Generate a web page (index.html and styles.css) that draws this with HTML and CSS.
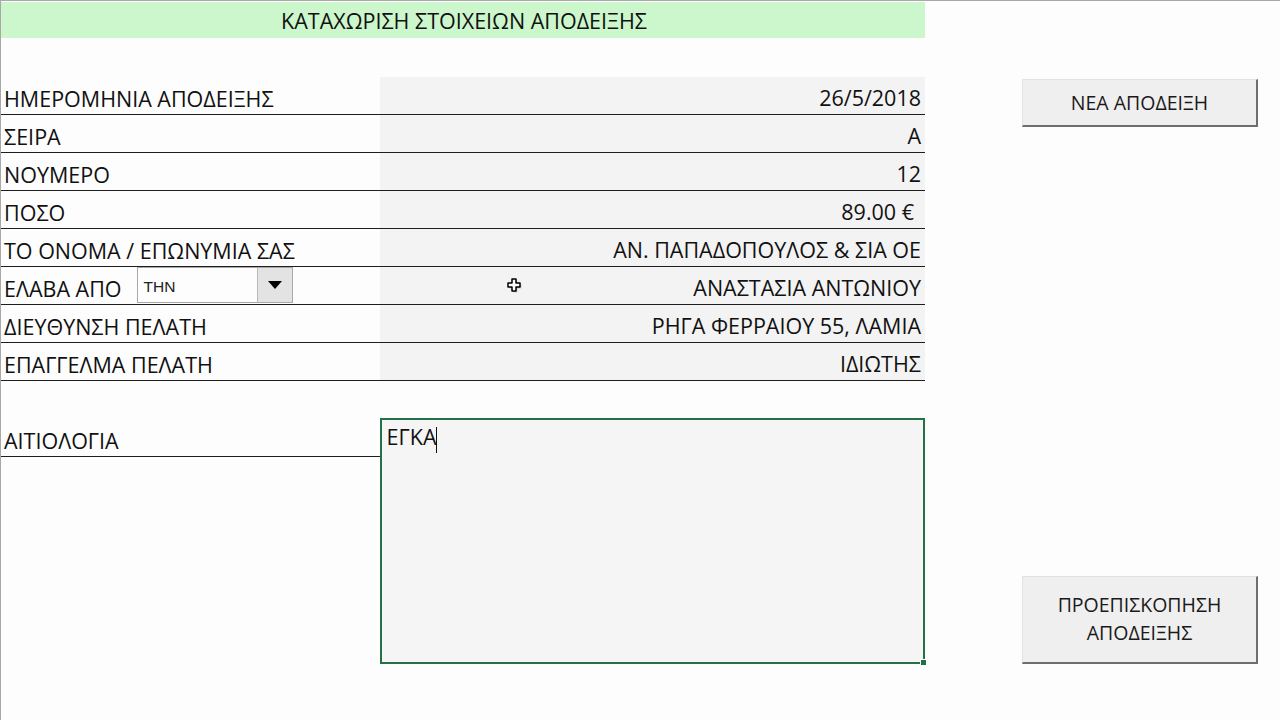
FILE: index.html
```html
<!DOCTYPE html>
<html lang="el">
<head>
<meta charset="utf-8">
<title>ΚΑΤΑΧΩΡΙΣΗ ΣΤΟΙΧΕΙΩΝ ΑΠΟΔΕΙΞΗΣ</title>
<link rel="stylesheet" href="styles.css">
</head>
<body>
<div class="page">
  <div class="sheet">
    <div class="title">ΚΑΤΑΧΩΡΙΣΗ ΣΤΟΙΧΕΙΩΝ ΑΠΟΔΕΙΞΗΣ</div>
    <div class="rows">
      <div class="row"><div class="label">ΗΜΕΡΟΜΗΝΙΑ ΑΠΟΔΕΙΞΗΣ</div><div class="value">26/5/2018</div></div>
      <div class="row"><div class="label">ΣΕΙΡΑ</div><div class="value">Α</div></div>
      <div class="row"><div class="label">ΝΟΥΜΕΡΟ</div><div class="value">12</div></div>
      <div class="row"><div class="label">ΠΟΣΟ</div><div class="value money">89.00 €</div></div>
      <div class="row"><div class="label">ΤΟ ΟΝΟΜΑ / ΕΠΩΝΥΜΙΑ ΣΑΣ</div><div class="value">ΑΝ. ΠΑΠΑΔΟΠΟΥΛΟΣ &amp; ΣΙΑ ΟΕ</div></div>
      <div class="row">
        <div class="label with-combo">
          <span>ΕΛΑΒΑ ΑΠΟ</span>
          <div class="combo">
            <span class="combo-text">ΤΗΝ</span>
            <span class="combo-btn"><svg width="14" height="8" viewBox="0 0 14 8"><path d="M0 0H14L7 8Z" fill="#000"/></svg></span>
          </div>
        </div>
        <div class="value cursor-host">ΑΝΑΣΤΑΣΙΑ ΑΝΤΩΝΙΟΥ
          <svg class="move-cursor" width="16" height="16" viewBox="0 0 16 16">
            <path d="M6 2H10V6H14V10H10V14H6V10H2V6H6Z" fill="#888" opacity="0.35" transform="translate(1.5 1.5)"/>
            <path d="M6 2H10V6H14V10H10V14H6V10H2V6H6Z" fill="#fff" stroke="#000" stroke-width="1.5" stroke-linejoin="round"/>
          </svg>
        </div>
      </div>
      <div class="row"><div class="label">ΔΙΕΥΘΥΝΣΗ ΠΕΛΑΤΗ</div><div class="value">ΡΗΓΑ ΦΕΡΡΑΙΟΥ 55, ΛΑΜΙΑ</div></div>
      <div class="row"><div class="label">ΕΠΑΓΓΕΛΜΑ ΠΕΛΑΤΗ</div><div class="value">ΙΔΙΩΤΗΣ</div></div>
    </div>
    <div class="notes">
      <div class="label notes-label">ΑΙΤΙΟΛΟΓΙΑ</div>
      <div class="textbox"><span class="typed">ΕΓΚΑ</span><span class="caret"></span><span class="handle"></span></div>
    </div>
  </div>
  <div class="side">
    <div class="btn btn-new">ΝΕΑ ΑΠΟΔΕΙΞΗ</div>
    <div class="btn btn-preview">ΠΡΟΕΠΙΣΚΟΠΗΣΗ<br>ΑΠΟΔΕΙΞΗΣ</div>
  </div>
</div>
</body>
</html>
```

FILE: styles.css
```css
html, body {
  margin: 0;
  padding: 0;
  height: 100%;
}
body {
  background: #fdfdfd;
  font-family: "Open Sans", "Noto Sans", "DejaVu Sans", sans-serif;
  color: #111;
  overflow: hidden;
}
.page {
  display: flex;
  height: 720px;
  box-sizing: border-box;
  border-top: 1px solid #a8a8a8;
  border-left: 1px solid #a8a8a8;
}
.sheet {
  width: 924px;
  display: flex;
  flex-direction: column;
}
.title {
  margin-top: 1px;
  height: 36px;
  background: #ccf7cc;
  display: flex;
  align-items: center;
  justify-content: center;
  font-size: 21.5px;
  padding-left: 2px;
}
.rows {
  margin-top: 39px;
  display: flex;
  flex-direction: column;
}
.row {
  display: flex;
  height: 38px;
  box-sizing: border-box;
  border-bottom: 1px solid #1e1e1e;
}
.label {
  width: 379px;
  display: flex;
  align-items: flex-end;
  padding-left: 3px;
  padding-bottom: 1px;
  box-sizing: border-box;
  font-size: 21.5px;
  white-space: nowrap;
}
.value {
  flex: 1;
  background: #f3f3f3;
  display: flex;
  align-items: flex-end;
  justify-content: flex-end;
  padding-right: 4px;
  padding-bottom: 2px;
  box-sizing: border-box;
  font-size: 21.5px;
  white-space: nowrap;
}
.value.money {
  padding-right: 11px;
}
.with-combo {
  gap: 15px;
}
.combo {
  align-self: flex-start;
  width: 156px;
  height: 36px;
  box-sizing: border-box;
  border: 1px solid #a9a9a9;
  background: #fdfdfd;
  display: flex;
}
.combo-text {
  flex: 1;
  display: flex;
  align-items: center;
  padding-left: 6px;
  padding-top: 3px;
  font-size: 15.5px;
  font-family: "Liberation Sans", Arial, sans-serif;
  color: #222;
}
.combo-btn {
  width: 34px;
  background: #e3e3e3;
  border-left: 1px solid #b8b8b8;
  display: flex;
  align-items: center;
  justify-content: center;
}
.cursor-host {
  position: relative;
}
.move-cursor {
  position: absolute;
  left: 126px;
  top: 10px;
}
.notes {
  margin-top: 37px;
  display: flex;
  align-items: flex-start;
}
.notes-label {
  height: 39px;
  border-bottom: 1px solid #1e1e1e;
}
.textbox {
  position: relative;
  width: 546px;
  height: 246px;
  box-sizing: border-box;
  border: 2px solid #217346;
  background: #f5f5f5;
  padding: 2px 0 0 5px;
  font-size: 21.5px;
  display: flex;
  align-items: flex-start;
}
.typed {
  line-height: 30px;
}
.caret {
  display: inline-block;
  width: 1px;
  height: 26px;
  margin-top: 5px;
  background: #111;
}
.handle {
  position: absolute;
  right: -4px;
  bottom: -4px;
  width: 5px;
  height: 5px;
  background: #217346;
  border: 1px solid #fff;
}
.side {
  flex: 1;
  display: flex;
  flex-direction: column;
  align-items: flex-start;
  padding-left: 97px;
}
.btn {
  width: 236px;
  box-sizing: border-box;
  background: #efefef;
  border-top: 1px solid #e2e2e2;
  border-left: 1px solid #e2e2e2;
  border-right: 2px solid #6e6e6e;
  border-bottom: 2px solid #6e6e6e;
  display: flex;
  align-items: center;
  justify-content: center;
  text-align: center;
  font-size: 19.5px;
  color: #1a1a1a;
  padding-bottom: 1px;
}
.btn-new {
  margin-top: 78px;
  height: 48px;
}
.btn-preview {
  margin-top: 449px;
  height: 88px;
  line-height: 28px;
}
```
